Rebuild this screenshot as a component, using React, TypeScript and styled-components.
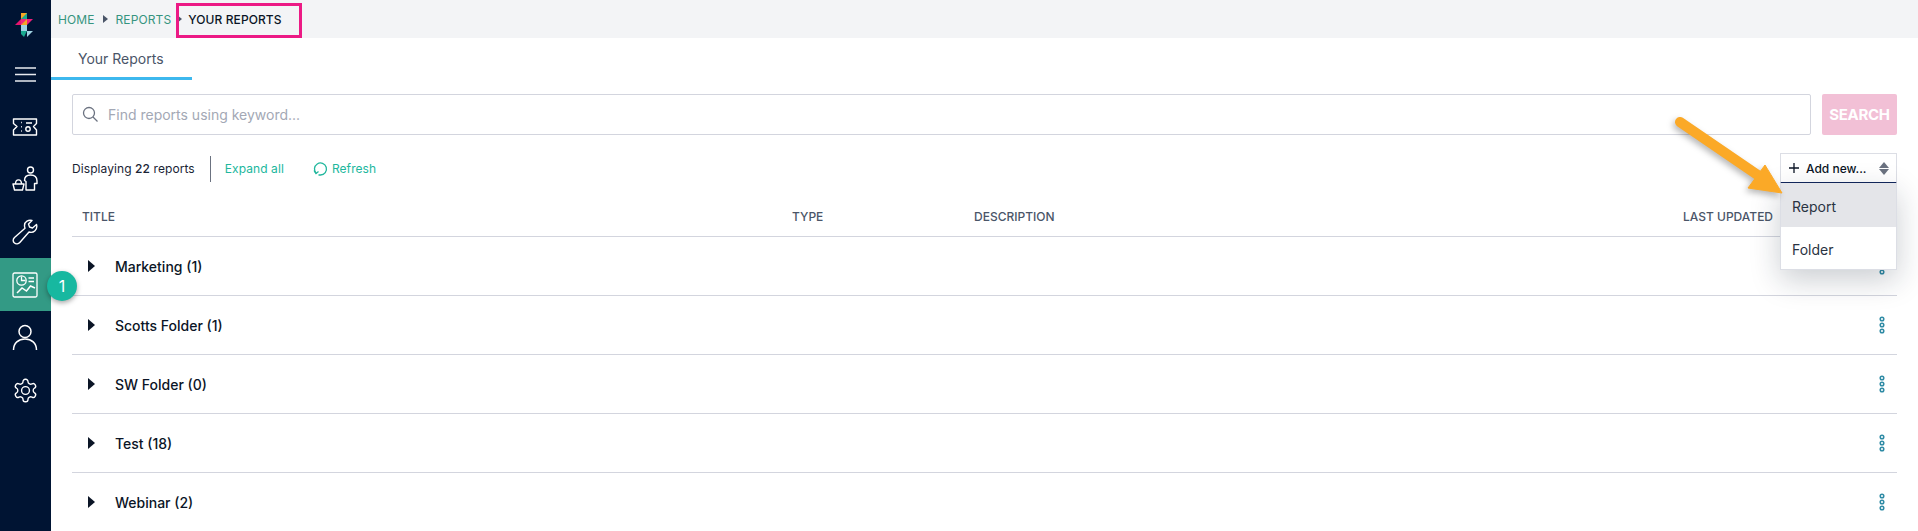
import React from 'react';
import styled, { createGlobalStyle } from 'styled-components';

const GlobalStyle = createGlobalStyle`
  html, body {
    margin: 0;
    height: 100%;
    overflow: hidden;
    background: #fff;
  }
  * {
    box-sizing: border-box;
  }
  body {
    font-family: Inter, "Liberation Sans", sans-serif;
    color: #0b1526;
  }
`;

const Page = styled.div`
  position: relative;
  display: flex;
  width: 1918px;
  height: 531px;
  overflow: hidden;
`;

const Sidebar = styled.nav`
  flex: 0 0 51px;
  display: flex;
  flex-direction: column;
  background: #001433;
`;

const LogoSlot = styled.div`
  height: 46px;
  padding: 13px 3px 0 0;
  display: flex;
  justify-content: center;
`;

const NavItem = styled.div<{ $active?: boolean }>`
  height: 53px;
  padding-right: 1px;
  display: flex;
  align-items: center;
  justify-content: center;
  background: ${(p) => (p.$active ? '#339a85' : 'transparent')};
  color: #fff;
`;

const Main = styled.main`
  flex: 1;
  min-width: 0;
  display: flex;
  flex-direction: column;
`;

const Breadcrumbs = styled.div`
  height: 38px;
  flex: none;
  padding-left: 7px;
  display: flex;
  align-items: center;
  background: #f3f4f6;
  font-size: 12px;
  letter-spacing: 0.1px;
`;

const Crumb = styled.span<{ $current?: boolean }>`
  color: ${(p) => (p.$current ? '#0b1526' : '#36947f')};
  font-weight: ${(p) => (p.$current ? 500 : 400)};
`;

const CrumbArrow = styled.span<{ $gap?: number }>`
  width: 0;
  height: 0;
  margin: 0 ${(p) => p.$gap ?? 8}px;
  border-left: 5px solid #4a5568;
  border-top: 4.5px solid transparent;
  border-bottom: 4.5px solid transparent;
`;

const Tabs = styled.div`
  height: 42px;
  flex: none;
  display: flex;
`;

const Tab = styled.div`
  width: 141px;
  padding: 12px 0 0 27px;
  border-bottom: 3px solid #3db8ee;
  font-size: 14px;
  color: #4a5568;
`;

const Content = styled.div`
  padding: 14px 21px 0;
`;

const SearchRow = styled.div`
  display: flex;
  gap: 11px;
  height: 41px;
`;

const SearchBox = styled.div`
  flex: 1;
  display: flex;
  align-items: center;
  gap: 9px;
  padding-left: 9px;
  border: 1px solid #d3d5de;
  border-radius: 2px;
  font-size: 14px;
  color: #a3a8b5;
`;

const SearchButton = styled.div`
  width: 75px;
  display: flex;
  align-items: center;
  justify-content: center;
  border-radius: 2px;
  background: #f2c0d6;
  color: #fff;
  font-size: 15px;
  font-weight: 700;
  letter-spacing: -0.3px;
`;

const Toolbar = styled.div`
  height: 33px;
  margin-top: 17px;
  display: flex;
  align-items: center;
  font-size: 12px;
  letter-spacing: 0.08px;
`;

const Count = styled.span`
  color: #1a2435;
  b {
    font-weight: 500;
  }
`;

const ToolbarDivider = styled.span`
  width: 1px;
  height: 26px;
  margin: 0 14px 0 15px;
  background: #6b7280;
`;

const ToolLink = styled.span`
  display: inline-flex;
  align-items: center;
  gap: 4px;
  margin-right: 29px;
  color: #21b79d;
`;

const AddNew = styled.div`
  position: relative;
  width: 117px;
  height: 31px;
  margin-left: auto;
  padding: 0 7px;
  display: flex;
  align-items: center;
  gap: 6px;
  border: 1px solid #dcdee5;
  border-bottom: 2px solid #12275c;
  font-size: 12px;
  font-weight: 500;
  letter-spacing: 0;
  color: #0b1526;
`;

const Stepper = styled.span`
  margin-left: auto;
  display: flex;
  flex-direction: column;
  gap: 1px;
  &::before,
  &::after {
    content: '';
    width: 0;
    height: 0;
    border-left: 5px solid transparent;
    border-right: 5px solid transparent;
  }
  &::before {
    border-bottom: 6px solid #6b7280;
  }
  &::after {
    border-top: 6px solid #6b7280;
  }
`;

const Menu = styled.div`
  position: absolute;
  z-index: 3;
  top: 29px;
  left: -1px;
  width: 117px;
  background: #fff;
  border: 1px solid #dcdee5;
  border-top: 0;
  box-shadow: 0 10px 30px rgba(20, 30, 50, 0.22);
`;

const MenuItem = styled.div<{ $active?: boolean }>`
  height: 42px;
  padding: 2px 0 0 11px;
  display: flex;
  align-items: center;
  background: ${(p) => (p.$active ? '#e4e5e9' : '#fff')};
  font-size: 14px;
  font-weight: 400;
  color: #2a3342;
  &:first-child {
    height: 44px;
    padding-top: 3px;
  }
`;

const TableHead = styled.div`
  height: 49px;
  margin-top: 3px;
  display: grid;
  grid-template-columns: 710px 182px 709px 1fr;
  align-items: center;
  padding: 9px 0 0 10px;
  border-bottom: 1px solid #d3d5de;
  font-size: 12px;
  font-weight: 500;
  color: #4a5568;
`;

const Row = styled.div`
  height: 59px;
  display: flex;
  align-items: center;
  padding: 0 12px 0 16px;
  border-bottom: 1px solid #d3d5de;
`;

const Caret = styled.span`
  width: 0;
  height: 0;
  margin-right: 20px;
  border-left: 7px solid #0b1526;
  border-top: 6px solid transparent;
  border-bottom: 6px solid transparent;
`;

const RowTitle = styled.span`
  font-size: 14px;
  font-weight: 500;
  color: #0b1526;
`;

const RowMenu = styled.span`
  margin-left: auto;
  display: flex;
`;

const Badge = styled.div`
  position: absolute;
  z-index: 2;
  left: 47px;
  top: 271px;
  width: 30px;
  height: 30px;
  display: flex;
  align-items: center;
  justify-content: center;
  border-radius: 50%;
  background: #17b8a0;
  box-shadow: 0 2px 5px rgba(0, 0, 0, 0.35);
  color: #fff;
  font-size: 16px;
`;

const Highlight = styled.div`
  position: absolute;
  left: 176px;
  top: 3px;
  width: 126px;
  height: 35px;
  border: 3px solid #ec1a85;
  pointer-events: none;
`;

const ArrowOverlay = styled.svg`
  position: absolute;
  z-index: 4;
  left: 1660px;
  top: 105px;
  filter: drop-shadow(-2px 3px 3px rgba(0, 0, 0, 0.28));
`;

const Logo = () => (
  <svg width="18" height="24" viewBox="0 0 18 24">
    <rect x="6" y="0" width="6" height="6" fill="#f5a623" />
    <path d="M6 6 12 0V6Z" fill="#17a88f" />
    <path d="M0 12 6 6V12Z" fill="#e6156f" />
    <rect x="6" y="6" width="6" height="6" fill="#f5a623" />
    <path d="M6 6H12L6 12Z" fill="#ee2a7b" />
    <path d="M12 6H18L12 12Z" fill="#ee1f7a" />
    <rect x="6" y="12" width="6" height="6" fill="#9fd3e3" />
    <path d="M6 18H12L9 24 6 21Z" fill="#17a88f" />
    <path d="M12 18H18L12 24Z" fill="#9fd3e3" />
  </svg>
);

const MenuIcon = () => (
  <svg width="24" height="20" viewBox="0 0 24 20" fill="none" stroke="#e8eaf0" strokeWidth="1.6">
    <path d="M2 5H23M2 11.500H23M2 18H23" />
  </svg>
);

const TicketIcon = () => (
  <svg width="26" height="22" viewBox="0 0 26 22" fill="none" stroke="#fff" strokeWidth="1.4">
    <path d="M1.5 4H24.5V8.500L21.500 11.500 24.5 15V20H1.5V15L5 11.500 1.5 8.500Z" strokeLinejoin="round" />
    <path d="M9 7.500H9.800M9 11.800H9.800M9 16H9.800M14 8H20" />
    <circle cx="16" cy="14" r="2.200" />
  </svg>
);

const BasketPersonIcon = () => (
  <svg width="26" height="26" viewBox="0 0 26 26" fill="none" stroke="#fff" strokeWidth="1.4" strokeLinejoin="round">
    <circle cx="18.5" cy="4" r="3" />
    <path d="M14 24V15.5L12.5 14.5C12.5 10.5 15 9 18.5 9 22.500 9 25 11 25 15V17.500H22.500V24Z" />
    <path d="M1 18H12L10.500 24H2.500Z" />
    <path d="M3.500 18C3.500 12.500 9.500 12.500 9.500 18" />
  </svg>
);

const WrenchIcon = () => (
  <svg width="26" height="26" viewBox="0 0 26 26" fill="none" stroke="#fff" strokeWidth="1.4" strokeLinejoin="round">
    <path d="M24.500 5.500 20.500 9 17.500 8 16.500 5 20 1.500C16.500.5 12.500 2.500 12.500 6.500 12.500 7.800 12.800 8.500 13 9.300L2.500 18.500C.5 20.500 1 23 2.500 24 4 25.500 6.500 25 7.800 23.500L17 13C21.500 14.500 26 10.500 24.500 5.500Z" />
  </svg>
);

const ReportIcon = () => (
  <svg width="26" height="26" viewBox="0 0 26 26" fill="none" stroke="#fff" strokeWidth="1.3">
    <rect x="1" y="1" width="24" height="24" rx="1.500" />
    <circle cx="9.500" cy="8.500" r="4.700" />
    <path d="M9.500 4.500V8.500H13.500M16.500 6H22M16.500 9.500H22" />
    <path d="M5 21 10 16 14.500 19 18.500 14 23 16" strokeWidth="1.500" />
  </svg>
);

const PersonIcon = () => (
  <svg width="26" height="27" viewBox="0 0 26 27" fill="none" stroke="#fff" strokeWidth="1.5">
    <circle cx="13" cy="7.500" r="6" />
    <path d="M1.500 26C1.500 19 6.500 15 13 15S24.500 19 24.500 26" />
  </svg>
);

const GearIcon = () => (
  <svg width="27" height="27" viewBox="0 0 24 24" fill="none" stroke="#fff" strokeWidth="1.2" strokeLinejoin="round">
    <path d="M12.220 2h-.440a2 2 0 0 0-2 2v.180a2 2 0 0 1-1 1.730l-.430.250a2 2 0 0 1-2 0l-.150-.080a2 2 0 0 0-2.730.730l-.220.380a2 2 0 0 0 .730 2.730l.150.100a2 2 0 0 1 1 1.720v.510a2 2 0 0 1-1 1.740l-.150.090a2 2 0 0 0-.730 2.730l.220.380a2 2 0 0 0 2.730.730l.150-.080a2 2 0 0 1 2 0l.430.250a2 2 0 0 1 1 1.730V20a2 2 0 0 0 2 2h.440a2 2 0 0 0 2-2v-.180a2 2 0 0 1 1-1.730l.430-.250a2 2 0 0 1 2 0l.150.080a2 2 0 0 0 2.730-.730l.220-.390a2 2 0 0 0-.730-2.730l-.150-.080a2 2 0 0 1-1-1.740v-.500a2 2 0 0 1 1-1.740l.150-.090a2 2 0 0 0 .730-2.730l-.220-.380a2 2 0 0 0-2.730-.730l-.150.080a2 2 0 0 1-2 0l-.430-.250a2 2 0 0 1-1-1.730V4a2 2 0 0 0-2-2z" />
    <circle cx="12" cy="12" r="3.500" />
  </svg>
);

const SearchIcon = () => (
  <svg width="17" height="17" viewBox="0 0 17 17" fill="none" stroke="#6b7280" strokeWidth="1.300">
    <circle cx="7" cy="7" r="5.500" />
    <path d="M11 11 15.500 15.500" />
  </svg>
);

const RefreshIcon = () => (
  <svg width="15" height="15" viewBox="0 0 15 15" fill="none" stroke="#21b79d" strokeWidth="1.300">
    <path d="M3.500 12.500A6 6 0 1 1 7.500 14H5.500" />
    <path d="M1 9.500 3 12.500 5.500 10.500" />
  </svg>
);

const PlusIcon = () => (
  <svg width="12" height="12" viewBox="0 0 12 12" stroke="#0b1526" strokeWidth="1.300">
    <path d="M6 1V11M1 6H11" />
  </svg>
);

const DotsIcon = () => (
  <svg width="6" height="18" viewBox="0 0 6 18" fill="none" stroke="#2f8ba5" strokeWidth="1.500">
    <circle cx="3" cy="3" r="1.800" />
    <circle cx="3" cy="9" r="1.800" />
    <circle cx="3" cy="15" r="1.800" />
  </svg>
);

const navIcons = [
  { key: 'menu', icon: <MenuIcon /> },
  { key: 'tickets', icon: <TicketIcon /> },
  { key: 'audience', icon: <BasketPersonIcon /> },
  { key: 'tools', icon: <WrenchIcon /> },
  { key: 'reports', icon: <ReportIcon />, active: true },
  { key: 'profile', icon: <PersonIcon /> },
  { key: 'settings', icon: <GearIcon /> },
];

const folders = ['Marketing (1)', 'Scotts Folder (1)', 'SW Folder (0)', 'Test (18)', 'Webinar (2)'];

export default function App() {
  return (
    <Page>
      <GlobalStyle />
      <Sidebar>
        <LogoSlot>
          <Logo />
        </LogoSlot>
        {navIcons.map((item) => (
          <NavItem key={item.key} $active={item.active}>
            {item.icon}
          </NavItem>
        ))}
      </Sidebar>
      <Main>
        <Breadcrumbs>
          <Crumb>HOME</Crumb>
          <CrumbArrow />
          <Crumb>REPORTS</Crumb>
          <CrumbArrow $gap={6} />
          <Crumb $current>YOUR REPORTS</Crumb>
        </Breadcrumbs>
        <Tabs>
          <Tab>Your Reports</Tab>
        </Tabs>
        <Content>
          <SearchRow>
            <SearchBox>
              <SearchIcon />
              Find reports using keyword...
            </SearchBox>
            <SearchButton>SEARCH</SearchButton>
          </SearchRow>
          <Toolbar>
            <Count>
              Displaying <b>22</b> reports
            </Count>
            <ToolbarDivider />
            <ToolLink>Expand all</ToolLink>
            <ToolLink>
              <RefreshIcon />
              Refresh
            </ToolLink>
            <AddNew>
              <PlusIcon />
              Add new...
              <Stepper />
              <Menu>
                <MenuItem $active>Report</MenuItem>
                <MenuItem>Folder</MenuItem>
              </Menu>
            </AddNew>
          </Toolbar>
          <TableHead>
            <span>TITLE</span>
            <span>TYPE</span>
            <span>DESCRIPTION</span>
            <span>LAST UPDATED</span>
          </TableHead>
          {folders.map((name) => (
            <Row key={name}>
              <Caret />
              <RowTitle>{name}</RowTitle>
              <RowMenu>
                <DotsIcon />
              </RowMenu>
            </Row>
          ))}
        </Content>
      </Main>
      <Badge>1</Badge>
      <Highlight />
      <ArrowOverlay width="130" height="105" viewBox="0 0 130 105" fill="none">
        <path d="M20 17 102 73" stroke="#fba927" strokeWidth="10" strokeLinecap="round" />
        <path d="M122 88 88 83 105 60Z" fill="#fba927" stroke="#fba927" strokeWidth="1" strokeLinejoin="round" />
      </ArrowOverlay>
    </Page>
  );
}
